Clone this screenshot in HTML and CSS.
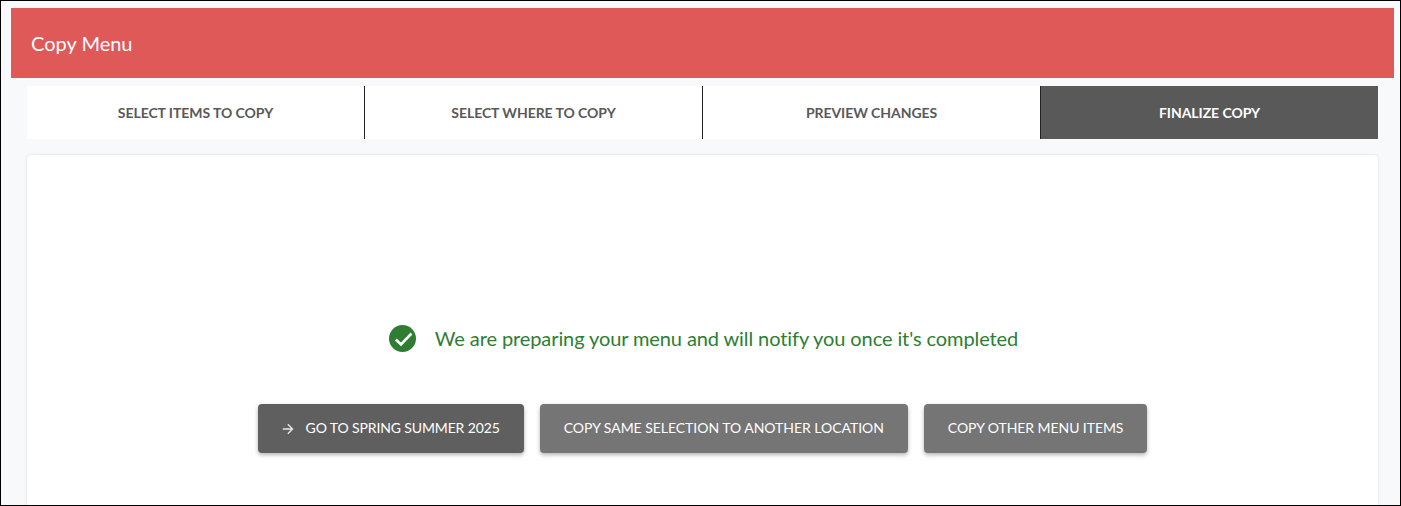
FILE: index.html
```html
<!DOCTYPE html>
<html lang="en">
<head>
    <meta charset="UTF-8">
    <meta name="viewport" content="width=device-width, initial-scale=1.0">
    <title>Copy Menu</title>
    <link rel="stylesheet" href="styles.css">
</head>
<body>
    <div class="page">
        <header class="header">Copy Menu</header>

        <nav class="steps">
            <div class="step">Select items to copy</div>
            <div class="step">Select where to copy</div>
            <div class="step">Preview changes</div>
            <div class="step active">Finalize copy</div>
        </nav>

        <main class="card">
            <div class="message">
                <svg class="check-icon" viewBox="0 0 27 27" aria-hidden="true">
                    <circle cx="13.5" cy="13.5" r="13.5" fill="#2e7d32"/>
                    <path d="M6.8 14.5l5.2 5L22.5 8.5" fill="none" stroke="#fff" stroke-width="2.6"/>
                </svg>
                <span>We are preparing your menu and will notify you once it's completed</span>
            </div>

            <div class="actions">
                <button class="btn btn-primary">
                    <svg class="arrow-icon" viewBox="0 0 12 12" aria-hidden="true">
                        <path d="M.8 6h9.8M5.8 1.2L10.6 6l-4.8 4.8" fill="none" stroke="#e8e8e8" stroke-width="1.3"/>
                    </svg>
                    Go to Spring Summer 2025
                </button>
                <button class="btn btn-wide">Copy same selection to another location</button>
                <button class="btn">Copy other menu items</button>
            </div>
        </main>
    </div>
</body>
</html>
```

FILE: styles.css
```css
* {
    box-sizing: border-box;
}

body {
    margin: 0;
    font-family: Lato, "Open Sans", sans-serif;
    background-color: #fff;
}

.page {
    height: 506px;
    padding: 7px 6px 0 10px;
    overflow: hidden;
    border: 1px solid #000;
    background-color: #f8f9fb;
}

.header {
    height: 70px;
    padding-left: 20px;
    display: flex;
    align-items: center;
    background-color: #df5959;
    color: #fff;
    font-size: 20px;
}

.steps {
    display: flex;
    height: 53px;
    margin: 8px 16px 0;
}

.step {
    flex: 1;
    display: flex;
    align-items: center;
    justify-content: center;
    background-color: #fff;
    border-right: 1px solid #222;
    color: #595959;
    font-size: 14px;
    font-weight: 700;
    letter-spacing: -0.06px;
    text-transform: uppercase;
}

.step:last-child {
    border-right: none;
}

.step.active {
    background-color: #595959;
    color: #fff;
}

.card {
    height: 360px;
    margin: 16px 16px 0;
    padding-top: 168px;
    background-color: #fff;
    border-radius: 4px;
    box-shadow: 0 0 3px rgba(0, 0, 0, 0.12);
}

.message {
    display: flex;
    align-items: center;
    justify-content: center;
    gap: 19px;
    height: 30px;
    padding-left: 2px;
    color: #2e7d32;
    font-size: 20px;
    letter-spacing: -0.1px;
}

.check-icon {
    width: 27px;
    height: 27px;
}

.actions {
    display: flex;
    justify-content: center;
    gap: 16px;
    margin-top: 51px;
}

.btn {
    height: 49px;
    padding: 0 24px 2px;
    display: flex;
    align-items: center;
    border: none;
    border-radius: 4px;
    background-color: #757575;
    box-shadow: 0 2px 4px rgba(0, 0, 0, 0.3);
    color: #fff;
    font-family: inherit;
    font-size: 14px;
    letter-spacing: -0.07px;
    text-transform: uppercase;
    cursor: pointer;
}

.btn-primary {
    background-color: #5f5f5f;
    letter-spacing: -0.13px;
}

.btn-wide {
    letter-spacing: -0.035px;
}

.arrow-icon {
    width: 12px;
    height: 12px;
    margin-top: 2px;
    margin-right: 12px;
}
```
